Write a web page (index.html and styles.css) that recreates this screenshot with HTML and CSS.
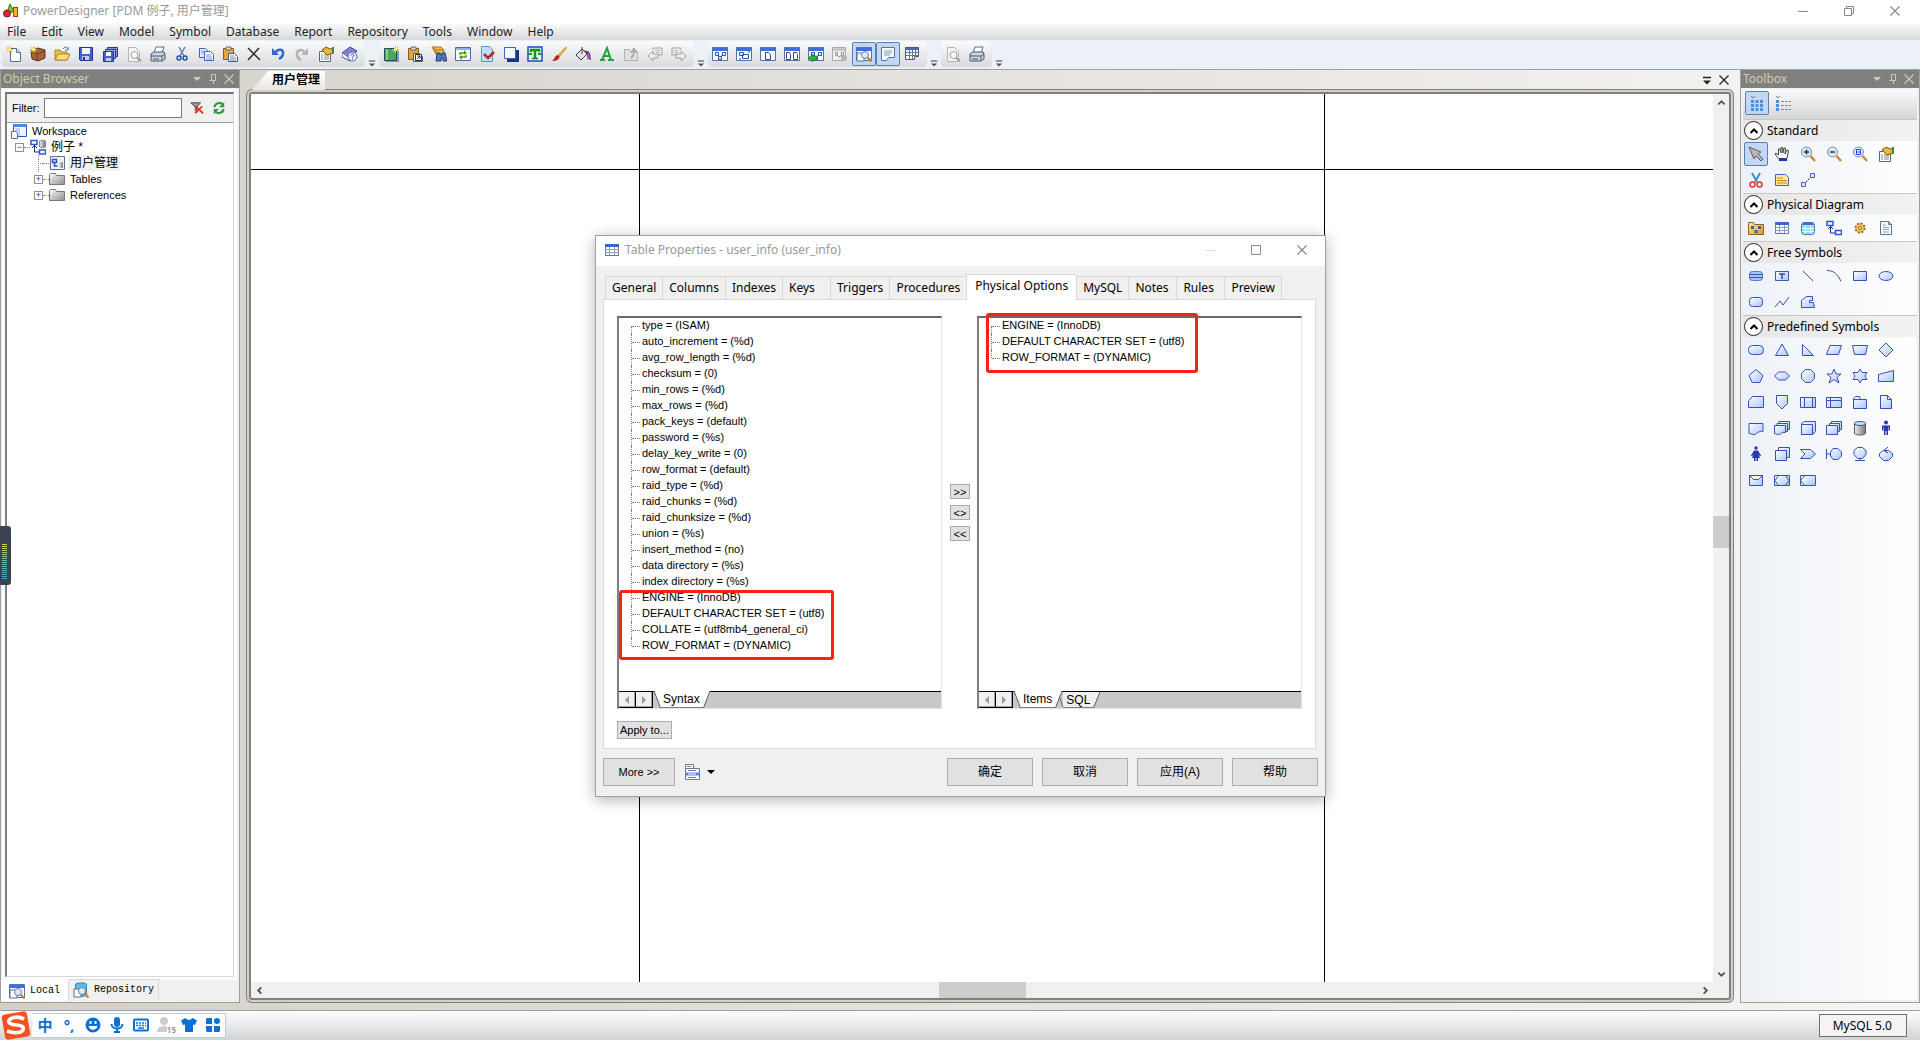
FILE: index.html
```html
<!DOCTYPE html>
<html lang="zh-CN">

	<head>
		<meta charset="UTF-8">
		<title>PowerDesigner [PDM 例子, 用户管理]</title>
		<link rel="stylesheet" href="styles.css">
	</head>

	<body>
		<!--图标库-->
		<svg class="sprite" aria-hidden="true">
			<defs>
				<linearGradient id="gBlue" x1="0" y1="0" x2="1" y2="1"><stop offset="0" stop-color="#fff"/><stop offset="1" stop-color="#a9c6fb"/></linearGradient>
				<linearGradient id="gGray" x1="0" y1="0" x2="1" y2="1"><stop offset="0" stop-color="#fff"/><stop offset="1" stop-color="#8c8c8c"/></linearGradient>
				<linearGradient id="gGold" x1="0" y1="0" x2="1" y2="1"><stop offset="0" stop-color="#fff0a8"/><stop offset="1" stop-color="#d99a1c"/></linearGradient>
				<linearGradient id="gCyl" x1="0" y1="0" x2="1" y2="0"><stop offset="0" stop-color="#eee"/><stop offset="1" stop-color="#777"/></linearGradient>
			</defs>
			<symbol id="spark" viewBox="0 0 16 16"><path d="M3.500 0v7M0 3.500h7M1 1l5 5M6 1L1 6" stroke="#f0c020"/><circle cx="3.500" cy="3.500" r="1.500" fill="#fff7a0"/></symbol>
			<symbol id="logo" viewBox="0 0 16 16"><path d="M8 1l4 8H5z" fill="#7dc243" stroke="#2f7a1c"/><rect x="11.500" y="4.500" width="4" height="9" fill="#f7b51b" stroke="#a83c0c"/><circle cx="5" cy="10.500" r="3.500" fill="#e3232c" stroke="#8c0f14"/></symbol>
			<symbol id="new" viewBox="0 0 16 16"><path d="M4.500 2.500h6l4 4v9h-10z" fill="#fff" stroke="#55708f"/><path d="M10.500 2.500v4h4" fill="#cfe0f2" stroke="#55708f"/><use href="#spark"/></symbol>
			<symbol id="project" viewBox="0 0 16 16"><path d="M1 5l7-3 7 2v8l-7 3-6-2z" fill="#a5653a" stroke="#5c3014"/><path d="M1 6l6 2 8-3M7 8v7" stroke="#6d3c1a" fill="none"/><use href="#spark"/></symbol>
			<symbol id="open" viewBox="0 0 16 16"><path d="M1 14V4h5l1 2h6v8z" fill="#f0bf45" stroke="#b1832a"/><path d="M1 14l3-6h12l-3 6z" fill="#fbdc7c" stroke="#b1832a"/><path d="M9 3c2-3 4-2 5 0M14 1v3h-3" stroke="#4a7bc0" fill="none"/></symbol>
			<symbol id="save" viewBox="0 0 16 16"><path d="M1.500 1.500h13v13h-12l-1-1z" fill="#4a5fd0" stroke="#28338f"/><path d="M4 2h8v6H4z" fill="#f4f7ff"/><path d="M4 10h7v4H4z" fill="#c8cfe8"/><path d="M5 11h2v3H5z" fill="#28338f"/></symbol>
			<symbol id="saveall" viewBox="0 0 16 16"><path d="M5.500 1.500h10v9h-10z" fill="#8b93dc" stroke="#28338f"/><path d="M3.500 3.500h10v9h-10z" fill="#aab1ea" stroke="#28338f"/><path d="M1.500 5.500h10v10h-10z" fill="#4a5fd0" stroke="#28338f"/><path d="M4 6h5v4H4z" fill="#f4f7ff"/><path d="M4 12h5v3H4z" fill="#c8cfe8"/></symbol>
			<symbol id="preview" viewBox="0 0 16 16"><path d="M2.500 1.500h7l4 4v10h-11z" fill="#f3f3f3" stroke="#b4b4b4"/><circle cx="8.500" cy="9" r="3.500" fill="#fafafa" stroke="#9a9a9a"/><path d="M11 12l4 3" stroke="#9a9a9a" stroke-width="2"/></symbol>
			<symbol id="print" viewBox="0 0 16 16"><path d="M6 1h8l-2 6H4z" fill="#fff" stroke="#5f6e86"/><path d="M1 8l3-2h10l1 2v5l-3 2H1z" fill="#cfd6e0" stroke="#4a5770"/><path d="M1 10h11l3-2M12 10v5M3 13h6" stroke="#4a5770" fill="none"/></symbol>
			<symbol id="cut" viewBox="0 0 16 16"><path d="M5 1l5 9M11 1L6 10" stroke="#6c7fa5" stroke-width="1.500"/><circle cx="5" cy="12" r="2" fill="none" stroke="#2450b8" stroke-width="1.500"/><circle cx="11" cy="12" r="2" fill="none" stroke="#2450b8" stroke-width="1.500"/></symbol>
			<symbol id="copy" viewBox="0 0 16 16"><path d="M1.500 2.500h6l2 2v7h-8z" fill="#e6efff" stroke="#3e62b4"/><path d="M6.500 5.500h6l3 3v6h-9z" fill="#fff" stroke="#3e62b4"/><path d="M3 5h3M3 7h3M8 9h5M8 11h6M8 13h6" stroke="#6a95e0"/></symbol>
			<symbol id="paste" viewBox="0 0 16 16"><path d="M1.500 2.500h10v11h-10z" fill="#e3a73b" stroke="#8e5a10"/><path d="M4 1h5v3H4z" fill="#ddd" stroke="#6b6b6b"/><path d="M6.500 7.500h6l3 3v5h-9z" fill="#fff" stroke="#445a88"/><path d="M8 10h4M8 12h6M8 14h6" stroke="#6a83b8"/></symbol>
			<symbol id="del" viewBox="0 0 16 16"><path d="M2 2l12 12M13 2L2 14" stroke="#2b2b2b" stroke-width="1.500"/></symbol>
			<symbol id="undo" viewBox="0 0 16 16"><path d="M5 7c3-5 9-4 8 1-.5 3-2 4-4 5" fill="none" stroke="#3468d0" stroke-width="2.500"/><path d="M2 2v7h7z" fill="#3468d0"/></symbol>
			<symbol id="redo" viewBox="0 0 16 16"><path d="M11 7C8 2 2 4 3 9c.5 3 2 4 4 5" fill="none" stroke="#b5b5b5" stroke-width="2.500"/><path d="M14 2v7H7z" fill="#b5b5b5"/></symbol>
			<symbol id="props" viewBox="0 0 16 16"><path d="M1.500 5.500h11v10h-11z" fill="#fff" stroke="#5b6675"/><path d="M3 9h2M6 9h5M3 11h2M6 11h5M3 13h2M6 13h5" stroke="#7b8696"/><path d="M4 4l4-3 4 2 4-1v5l-4 1-3 1z" fill="#e8b93b" stroke="#7d5b12"/><path d="M14 1h2v6h-2z" fill="#3b8a46"/></symbol>
			<symbol id="book" viewBox="0 0 16 16"><path d="M0 7l8-6 7 4-7 8z" fill="#8d7fd0" stroke="#4b4390"/><path d="M0 7v4l8 4v-2" fill="#fff" stroke="#4b4390"/><circle cx="10.500" cy="10.500" r="4.500" fill="#e9f1ff" stroke="#4d6bb4"/><path d="M9 9.500c0-2 3-2 3 0 0 1-1.500 1-1.500 2M10.500 12.500v1" fill="none" stroke="#2848a8"/></symbol>
			<symbol id="newmodel" viewBox="0 0 16 16"><path d="M1.500 2.500h12v12h-12z" fill="#4aa65a" stroke="#1f4d57"/><path d="M4 3v11" stroke="#c8e8cc"/><path d="M13 4l2 1v11H3" stroke="#334c70" fill="none"/><path d="M12.500 0v7M9 3.500h7M10 1l5 5M15 1l-5 5" stroke="#f0c020"/><circle cx="12.500" cy="3.500" r="1.500" fill="#fff7a0"/></symbol>
			<symbol id="pastelink" viewBox="0 0 16 16"><use href="#paste"/><path d="M8.500 8.500h6v6h-6z" fill="#fff" stroke="#333"/><path d="M10 13l3-3M10.500 10H13v2.500" stroke="#112a90" fill="none"/></symbol>
			<symbol id="find" viewBox="0 0 16 16"><path d="M1 1h9l3 3v4H5z" fill="#f2b950" stroke="#b07714"/><path d="M1 1l4 3h8M5 4v4" fill="none" stroke="#b07714"/><path d="M6 7h3v2h2V7h3l2 8h-4v-3h-2v3H5z" fill="#5277bd" stroke="#243c75"/></symbol>
			<symbol id="refresh" viewBox="0 0 16 16"><path d="M.5 1.500h15v13H.5z" fill="#fff" stroke="#4b6ca8"/><path d="M1 2h14v2H1z" fill="#8eb2ee"/><path d="M5 9V7h5M11 9v2H6" stroke="#4f9a14" stroke-width="1.500" fill="none"/><path d="M9 4l3 3-3 2zM7 9l-3 2 3 3z" fill="#4f9a14"/></symbol>
			<symbol id="check" viewBox="0 0 16 16"><path d="M2.500.5h8l3 3v12h-11z" fill="#bfe0fb" stroke="#5b93cc"/><path d="M5 8l4 4 6-6" stroke="#c4202c" stroke-width="2.500" fill="none"/></symbol>
			<symbol id="shadow" viewBox="0 0 16 16"><path d="M4 4h12v12H4z" fill="#16348e"/><path d="M1.500 1.500h11v11h-11z" fill="#f3f7ff" stroke="#3c62c4"/></symbol>
			<symbol id="textfmt" viewBox="0 0 16 16"><path d="M1 1h14v14H1z" fill="#e7ffe7" stroke="#1e48c8" stroke-width="1.500"/><path d="M3 3h10v3h-1l-1-1H9v7h2v1H5v-1h2V5H5L4 6H3z" fill="#179a27" stroke="#0c6d18" stroke-width=".5"/><path d="M1 8h4M11 8h4" stroke="#179a27" stroke-width="2"/></symbol>
			<symbol id="brush" viewBox="0 0 16 16"><path d="M14.500 1L7 9l1.500 1.500L16 2z" fill="#f4b23a" stroke="#b57a10" stroke-width=".5"/><path d="M7 9c-3 0-3 4-6 6 4 0 7-1 7.500-4.500z" fill="#b3251f"/></symbol>
			<symbol id="fill" viewBox="0 0 16 16"><path d="M1 9l6-6 5 5-6 6z" fill="#dfe4ea" stroke="#3c4148"/><path d="M7 1v7" stroke="#3c4148"/><path d="M9 5c4 0 4 3 4 8" stroke="#d82222" stroke-width="1.500" fill="none"/><path d="M11 6c4-1 4 4 4 8" stroke="#2849d8" stroke-width="1.500" fill="none"/></symbol>
			<symbol id="font" viewBox="0 0 16 16"><path d="M1 14h5M9 14h6M3 14L8 2l4 12M5 10h6" stroke="#23a33c" stroke-width="2" fill="none"/></symbol>
			<symbol id="folderup" viewBox="0 0 16 16"><path d="M1.500 3.500h5l1 2h7v9h-13z" fill="#e2e2e2" stroke="#b2b2b2"/><path d="M7 12c3 0 4-2 4-6M8 6l3-4 3 4z" stroke="#9d9d9d" fill="#b5b5b5"/></symbol>
			<symbol id="back" viewBox="0 0 16 16"><path d="M1 10l5-5v3h5v4H6v3z" fill="#ececec" stroke="#a0a0a0"/><path d="M6 4V2h9v7h-4" fill="none" stroke="#a0a0a0"/><path d="M8 4.500h5M9 6.500h4" stroke="#bbb"/></symbol>
			<symbol id="forward" viewBox="0 0 16 16"><path d="M15 10l-5-5v3H5v4h5v3z" fill="#ececec" stroke="#a0a0a0"/><path d="M10 4V2H1v7h4" fill="none" stroke="#a0a0a0"/><path d="M3 4.500h5M3 6.500h4" stroke="#bbb"/></symbol>
			<symbol id="win" viewBox="0 0 16 16"><path d="M.5 1.500h15v13H.5z" fill="#f8fbff" stroke="#5673a8"/><path d="M1 2h14v3H1z" fill="#3d6fdc"/></symbol>
			<symbol id="win1" viewBox="0 0 16 16"><use href="#win"/><path d="M3.500 6.500h3v3h-3zM10.500 6.500h3v3h-3zM6.500 10.500h3v3h-3zM6 9l2 2 3-2" fill="none" stroke="#2a4fb8"/></symbol>
			<symbol id="win2" viewBox="0 0 16 16"><use href="#win"/><path d="M3.500 6.500h4v3h-4zM6.500 8.500h6v4h-6zM12 6h2M3 13h2" fill="none" stroke="#2a4fb8"/></symbol>
			<symbol id="win3" viewBox="0 0 16 16"><use href="#win"/><path d="M5.500 6.500h3l2 2v5h-5z" fill="#fff" stroke="#33477a"/></symbol>
			<symbol id="win4" viewBox="0 0 16 16"><use href="#win"/><path d="M2.500 6.500h3l1 2v5h-4zM9.500 6.500h3l1 2v5h-4z" fill="#fff" stroke="#33477a"/></symbol>
			<symbol id="win5" viewBox="0 0 16 16"><use href="#win1"/><path d="M0 12l5-4v2h4v4H5v2z" fill="#2eb335" stroke="#117018" stroke-width=".5"/></symbol>
			<symbol id="win6" viewBox="0 0 16 16"><path d="M.5 1.500h13v13H.5z" fill="#f0f0f0" stroke="#aaa"/><path d="M1 2h12v3H1z" fill="#c8c8c8"/><path d="M3.500 6.500h2v3h-2zM9.500 6.500h2v3h-2zM5 9l2 2 3-2" fill="none" stroke="#999"/><circle cx="12" cy="12" r="3" fill="#b5b5b5"/></symbol>
			<symbol id="browser" viewBox="0 0 16 16"><use href="#win"/><path d="M1 7h5l2 2v6H1z" fill="#fff" stroke="#54709c"/><circle cx="9" cy="9" r="3.500" fill="#d9ecff" stroke="#6b7f9b"/><path d="M11.500 11.500l4 4" stroke="#d07a1c" stroke-width="2"/></symbol>
			<symbol id="output" viewBox="0 0 16 16"><path d="M1.500 1.500h13v10h-6l-2 3h-5z" fill="#f7faff" stroke="#5c7198"/><path d="M4 5h8M4 7h8M4 9h6" stroke="#8798b5"/></symbol>
			<symbol id="grid" viewBox="0 0 16 16"><path d="M1.500 1.500h13v9h-4v3h-9z" fill="#f7faff" stroke="#4d5870"/><path d="M2 3h12" stroke="#4a6bbd" stroke-width="2"/><path d="M2 6.500h12M2 9.500h12M5.500 4v9M8.500 4v9M11.500 4v7" stroke="#687591"/></symbol>
			<!--工具箱图标-->
			<symbol id="t-grid" viewBox="0 0 16 16"><path d="M2 1l2 2 2-2" fill="none" stroke="#777"/><path d="M2 5h3v3H2zM6.500 5h3v3h-3zM11 5h3v3h-3zM2 9h3v3H2zM6.500 9h3v3h-3zM11 9h3v3h-3zM2 13h3v3H2zM6.500 13h3v3h-3zM11 13h3v3h-3z" fill="#4f8fd8"/></symbol>
			<symbol id="t-list" viewBox="0 0 16 16"><path d="M1 1l2 2 2-2" fill="none" stroke="#777"/><path d="M1 5h3v3H1zM1 9h3v3H1zM1 13h3v3H1z" fill="#4f8fd8"/><path d="M6 6.500h10M6 10.500h10M6 14.500h10" stroke="#8a8a8a" stroke-dasharray="3 1"/></symbol>
			<symbol id="pointer" viewBox="0 0 16 16"><path d="M1 1l12 5-3 2 5 5-2 2-5-5-2 3z" fill="#b6b6b6" stroke="#5d5d5d"/></symbol>
			<symbol id="hand" viewBox="0 0 16 16"><path d="M4.500 12.500L1 8l1-1 2.500 2V3h1.500L7 7V1.500h1.500L9 7l1-5h1.500l-.5 6 2-4 1.500.5-1.500 8z" fill="#fff" stroke="#444"/><path d="M5 12.500h8V15H5z" fill="#1237b8"/></symbol>
			<symbol id="lens" viewBox="0 0 16 16"><circle cx="6.500" cy="6" r="5" fill="#d7ebff" stroke="#7a8ba5"/><path d="M10.500 10l4.500 5" stroke="#c98b28" stroke-width="2.500"/></symbol>
			<symbol id="zoomin" viewBox="0 0 16 16"><use href="#lens"/><path d="M4 6h5M6.500 3.500v5" stroke="#333" stroke-width="1.500"/></symbol>
			<symbol id="zoomout" viewBox="0 0 16 16"><use href="#lens"/><path d="M4 6h5" stroke="#333" stroke-width="1.500"/></symbol>
			<symbol id="zoompage" viewBox="0 0 16 16"><use href="#lens"/><path d="M4.500 3.500h4v5h-4zM4 6h5" stroke="#2448d8" fill="#fff"/></symbol>
			<symbol id="scissors" viewBox="0 0 16 16"><path d="M4 1l5 9M12 1L7 10" stroke="#3d8fd0" stroke-width="2"/><ellipse cx="4.500" cy="12.500" rx="2.500" ry="2.500" fill="none" stroke="#df3b22" stroke-width="1.500"/><ellipse cx="11.500" cy="12.500" rx="2.500" ry="2.500" fill="none" stroke="#df3b22" stroke-width="1.500"/></symbol>
			<symbol id="note" viewBox="0 0 16 16"><path d="M1.500 2.500h10l3 3v8h-13z" fill="#ffe9a0" stroke="#4a62b0"/><path d="M3 6h6M3 8.500h10M3 11h10" stroke="#c9860c"/></symbol>
			<symbol id="link" viewBox="0 0 16 16"><path d="M1.500 10.500h4v4h-4zM10.500 1.500h4v4h-4z" fill="#e4ecff" stroke="#4a5ec0"/><path d="M6 10l4-4" stroke="#222" stroke-dasharray="2 1"/></symbol>
			<symbol id="package" viewBox="0 0 16 16"><path d="M.5 14.500v-12h5l1 2h9v10z" fill="url(#gGold)" stroke="#8c6110"/><path d="M3 6h3v3H3zM10 6h3v3h-3zM6.500 10h3v3h-3z" fill="#3658b0"/><path d="M7 11h2v1H7zM4 7h1v1H4z" fill="#e33"/></symbol>
			<symbol id="table" viewBox="0 0 16 16"><path d="M1.500 2.500h13v11h-13z" fill="#fff" stroke="#6077a5"/><path d="M1 2h14v3H1z" fill="#3b66cf"/><path d="M1 7.500h14M1 10.500h14M5.500 5v8M10.500 5v8" stroke="#8c9dbd"/></symbol>
			<symbol id="view" viewBox="0 0 16 16"><rect x="1.500" y="2.500" width="13" height="12" rx="3" fill="#7fe8ea" stroke="#4d71ab"/><path d="M2 5V4l2-2h8l2 2v1z" fill="#3b72d8"/><path d="M2 8.500h12M2 11.500h12M5.500 5v9M10.500 5v9" stroke="#fff"/></symbol>
			<symbol id="ref" viewBox="0 0 16 16"><path d="M1 1.500h6v4H1zM9.500 10.500h6v4h-6z" fill="#fff" stroke="#2b56d8" stroke-width="1.500"/><path d="M4.500 6v7H9M2 9l2.500-2.500L7 9" stroke="#1a2c90" fill="none"/></symbol>
			<symbol id="gear" viewBox="0 0 16 16"><circle cx="8" cy="8" r="4.500" fill="#f0b645" stroke="#9a6414" stroke-width="2" stroke-dasharray="2 1.500"/><circle cx="8" cy="8" r="3.500" fill="#f6c860"/><circle cx="8" cy="8" r="1.500" fill="#fff" stroke="#9a6414"/></symbol>
			<symbol id="file" viewBox="0 0 16 16"><path d="M2.500 1.500h8l3 3v10h-11z" fill="#f4f8ff" stroke="#5c7396"/><path d="M5 5h3M5 7.500h6M5 9.500h6M5 12h6" stroke="#8fa3be"/><path d="M10.500 1.500v3h3" fill="none" stroke="#5c7396"/></symbol>
			<symbol id="title" viewBox="0 0 16 16"><rect x="1.500" y="3.500" width="13" height="9" rx="3" fill="#a8c4f5" stroke="#5a79c4"/><path d="M1 6.500h14M1 9.500h14" stroke="#3b57b0"/></symbol>
			<symbol id="tbox" viewBox="0 0 16 16"><path d="M1.500 3.500h13v9h-13z" fill="url(#gBlue)" stroke="#3b5bb4"/><path d="M5 6h6M8 6v5" stroke="#2c47a0" stroke-width="1.500"/></symbol>
			<symbol id="line" viewBox="0 0 16 16"><path d="M3 3l10 10" stroke="#3c50a8"/></symbol>
			<symbol id="arc" viewBox="0 0 16 16"><path d="M1 2.500c7 0 11 4 14 11" fill="none" stroke="#3c50a8"/></symbol>
			<symbol id="rect" viewBox="0 0 16 16"><path class="s" d="M1.500 3.500h13v9h-13z"/></symbol>
			<symbol id="ellipse" viewBox="0 0 16 16"><ellipse class="s" cx="8" cy="8" rx="7" ry="4.500"/></symbol>
			<symbol id="round" viewBox="0 0 16 16"><rect class="s" x="1.500" y="3.500" width="13" height="9" rx="3"/></symbol>
			<symbol id="poly" viewBox="0 0 16 16"><path d="M1 13l5-6 3 4 6-8" fill="none" stroke="#3c50a8"/></symbol>
			<symbol id="polygon" viewBox="0 0 16 16"><path class="s" d="M1.500 13.500v-7l5-4h6v4h-3v2h4l1 5z"/></symbol>
			<symbol id="p1" viewBox="0 0 16 16"><rect class="s" x=".5" y="3.500" width="15" height="9" rx="4"/></symbol>
			<symbol id="p2" viewBox="0 0 16 16"><path class="s" d="M8 2l6.500 11.500h-13z"/></symbol>
			<symbol id="p3" viewBox="0 0 16 16"><path class="s" d="M2.500 2.500l11 11h-11z"/></symbol>
			<symbol id="p4" viewBox="0 0 16 16"><path class="s" d="M4 3.500h11.500l-3 9H.5z"/></symbol>
			<symbol id="p5" viewBox="0 0 16 16"><path class="s" d="M.5 3.500h15l-2 9h-11z"/></symbol>
			<symbol id="p6" viewBox="0 0 16 16"><path class="s" d="M8 1l7 7-7 7-7-7z"/></symbol>
			<symbol id="p7" viewBox="0 0 16 16"><path class="s" d="M8 1.500l7 6-3 7H4l-3-7z"/></symbol>
			<symbol id="p8" viewBox="0 0 16 16"><path class="s" d="M.5 8l4-4h7l4 4-4 4h-7z"/></symbol>
			<symbol id="p9" viewBox="0 0 16 16"><path class="s" d="M5.500 1.500h5l4 4v5l-4 4h-5l-4-4v-5z"/></symbol>
			<symbol id="p10" viewBox="0 0 16 16"><path class="s" d="M8 1l2 5h5l-4 3.500 2 5.500-5-3.500L3 15l2-5.500L1 6h5z"/></symbol>
			<symbol id="p11" viewBox="0 0 16 16"><path class="s" d="M8 1l2 3.500h5L13 8l2 3.500h-5L8 15l-2-3.500H1L3 8 1 4.500h5z"/></symbol>
			<symbol id="p12" viewBox="0 0 16 16"><path class="s" d="M.5 13.500v-7l15-4v11z"/></symbol>
			<symbol id="p13" viewBox="0 0 16 16"><path class="s" d="M.5 13.500V7l4-4.500h11v11z"/></symbol>
			<symbol id="p14" viewBox="0 0 16 16"><path class="s" d="M2.500 1.500h11v8L8 15l-5.500-5.500z"/></symbol>
			<symbol id="p15" viewBox="0 0 16 16"><path class="s" d="M.5 3.500h15v10H.5zM4.500 3.500v10M12.500 3.500v10"/></symbol>
			<symbol id="p16" viewBox="0 0 16 16"><path class="s" d="M.5 3.500h15v10H.5zM.5 6.500h15M4.500 3.500v10"/></symbol>
			<symbol id="p17" viewBox="0 0 16 16"><path class="s" d="M1.500 14.500v-10l2-2h4l1 3h6v9zM1.500 5.500h7"/></symbol>
			<symbol id="p18" viewBox="0 0 16 16"><path class="s" d="M2.500 1.500h7l4 4v9h-11zM9.500 1.500v4h4"/></symbol>
			<symbol id="p19" viewBox="0 0 16 16"><path class="s" d="M1 3.500h14v8c-5-1-6 3-9 3-2 0-4-1-5-1z"/></symbol>
			<symbol id="p20" viewBox="0 0 16 16"><path class="s" d="M5 1.500h10.500v8H5z"/><path class="s" d="M3 3.500h10.500v8H3z"/><path class="s" d="M.5 5.500h11v7c-4-1-4 2-7 2-2 0-3-1-4-1z"/></symbol>
			<symbol id="p21" viewBox="0 0 16 16"><path class="s" d="M4.500 1.500h11v10l-3 3h-11v-11z"/><path class="s" d="M1.500 4.500h11v10h-11z"/></symbol>
			<symbol id="p22" viewBox="0 0 16 16"><path class="s" d="M5.500 1.500h10v8h-10z"/><path class="s" d="M3.500 3.500h10v8h-10z"/><path class="s" d="M.5 5.500h11v9H.5z"/></symbol>
			<symbol id="p23" viewBox="0 0 16 16"><path d="M2.500 3.500v10c2 2 9 2 11 0v-10z" fill="url(#gCyl)" stroke="#555a70"/><ellipse cx="8" cy="3.500" rx="5.500" ry="2" fill="#cfdcff" stroke="#3c50a8"/></symbol>
			<symbol id="p24" viewBox="0 0 16 16"><circle cx="8" cy="2.500" r="2" fill="#2a36b0"/><path d="M4 5.500h8v5h-1.500V7H10v8H8.500v-4h-1v4H6V7h-.5v3.500H4z" fill="#2a36b0"/></symbol>
			<symbol id="p25" viewBox="0 0 16 16"><circle cx="8" cy="2" r="1.700" fill="#2a36b0"/><path d="M6 4.500h4l3 5-1 1-2-3 2 4.500h-2V15H8.500v-3h-1v3H6v-3H4l2-4.500-2 3-1-1z" fill="#2a36b0"/></symbol>
			<symbol id="p26" viewBox="0 0 16 16"><path class="s" d="M4.500 1.500h11v10h-11z"/><path class="s" d="M1.500 4.500h11v10h-11z"/></symbol>
			<symbol id="p27" viewBox="0 0 16 16"><path class="s" d="M.5 3.500h10l5 4.500-5 4.500H.5L5 8z"/></symbol>
			<symbol id="p28" viewBox="0 0 16 16"><path class="s" d="M.5 3v10M.5 8h4M7 2.500h5L15.500 6v4L12 13.500H7L4.500 10V6z"/></symbol>
			<symbol id="p29" viewBox="0 0 16 16"><path class="s" d="M5.500 1.500h5l3.500 3v4l-3.500 4h-5l-3.500-4v-4zM8 12.500v2M3 14.500h10"/></symbol>
			<symbol id="p30" viewBox="0 0 16 16"><path class="s" d="M5.500 4.500h5l4 3v3l-4 4h-5l-4-4v-3z"/><path d="M10 1L6 4.500 10 7" fill="none" stroke="#2a3db5"/></symbol>
			<symbol id="p31" viewBox="0 0 16 16"><path class="s" d="M1.500 3.500h13v10h-13zM1.500 3.500l4 4h5l4-4"/></symbol>
			<symbol id="p32" viewBox="0 0 16 16"><path class="s" d="M.5 3.500h15v10H.5zM4.500 3.500L1 8.500l3.500 5M11.500 3.500l3.500 5-3.500 5"/></symbol>
			<symbol id="p33" viewBox="0 0 16 16"><path class="s" d="M.5 3.500h15v10H.5zM5 3.500l-4.500 5 4.500 5"/></symbol>
			<!--窗口与树图标-->
			<symbol id="down" viewBox="0 0 10 10"><path d="M1 3h8L5 7z" fill="currentColor"/></symbol>
			<symbol id="pin" viewBox="0 0 10 10"><path d="M3.500 6V.5h4V6M1.500 6.500h7M5.500 7v3" fill="none" stroke="currentColor"/></symbol>
			<symbol id="x" viewBox="0 0 10 10"><path d="M.5.5l9 9M9.500.5l-9 9" stroke="currentColor" stroke-width="1.200"/></symbol>
			<symbol id="min" viewBox="0 0 10 10"><path d="M0 5.500h10" stroke="currentColor"/></symbol>
			<symbol id="max" viewBox="0 0 10 10"><path d="M.5.5h9v9h-9z" fill="none" stroke="currentColor"/></symbol>
			<symbol id="restore" viewBox="0 0 10 10"><path d="M.5 2.500h7v7h-7zM2.500 2.500v-2h7v7h-2" fill="none" stroke="currentColor"/></symbol>
			<symbol id="more" viewBox="0 0 10 10"><path d="M1 2.500h8" stroke="currentColor" stroke-width="1.500"/><path d="M1 5.500h8L5 9.500z" fill="currentColor"/></symbol>
			<symbol id="chev" viewBox="0 0 10 10"><path d="M1.500 7L5 3.500 8.500 7" fill="none" stroke="currentColor" stroke-width="2"/></symbol>
			<symbol id="tri" viewBox="0 0 10 10"><path d="M7 1v8L3 5z" fill="currentColor"/></symbol>
			<symbol id="workspace" viewBox="0 0 16 16"><path d="M2.500 1.500h13v12h-13z" fill="#eef4ff" stroke="#2a57c8"/><path d="M2 1h14v3H2z" fill="#4f86ec"/><path d="M4 5h5v8H4z" fill="#c0d3f4"/><path d="M.5 8.500h4l2 2v5h-6z" fill="#fff" stroke="#54709c"/></symbol>
			<symbol id="pdm" viewBox="0 0 16 16"><path d="M9.500 2v6c1 1 5 1 6 0V2c-1-1-5-1-6 0z" fill="url(#gCyl)" stroke="#888"/><path d="M1 1.500h6v4H1zM9.500 11h6v4h-6z" fill="#fff" stroke="#2b56d8" stroke-width="1.500"/><path d="M4.500 6v7H9M2 9l2.500-2.500L7 9" stroke="#1a2c90" fill="none"/></symbol>
			<symbol id="diagram" viewBox="0 0 16 16"><path d="M1.500 1.500h14v13h-14z" fill="#eef1f6" stroke="#5f718f"/><path d="M3.500 4.500h4v3h-4zM5.500 8v3h3" fill="none" stroke="#2450c8" stroke-width="1.500"/><path d="M10 7h4v6h-4z" fill="url(#gCyl)"/></symbol>
			<symbol id="folder" viewBox="0 0 16 16"><path d="M.5 13.500v-10l1-1h5l1 2h8v9z" fill="url(#gGray)" stroke="#777"/></symbol>
			<symbol id="nofilter" viewBox="0 0 16 16"><path d="M1 2h11L8 7v6l-2-2V7z" fill="#9a9a9a" stroke="#444"/><path d="M6 6l9 8M14 6l-8 8" stroke="#e8321c" stroke-width="2"/></symbol>
			<symbol id="sync" viewBox="0 0 16 16"><path d="M3 7c0-5 7-6 9-3M13 9c0 5-7 6-9 3" fill="none" stroke="#2d9a46" stroke-width="2.500"/><path d="M14 1v6H8zM2 15V9h6z" fill="#2d9a46"/></symbol>
			<symbol id="report" viewBox="0 0 16 16"><path d="M1.500 15.500V.5h8v4h6v11z" fill="#fff" stroke="#6c7a90"/><path d="M1 4.500h9M3 2.500h4M4 6.500h8M4 13.500h8" stroke="#6c7a90"/><path d="M2 8.500h13v3H2z" fill="#5a7cf0"/><path d="M4 10h8" stroke="#fff"/></symbol>
			<symbol id="repo" viewBox="0 0 16 16"><path d="M2.500 2v11c2 2 9 2 11 0V2c-3-1.500-8-1.500-11 0z" fill="#62b8e8" stroke="#3684b8"/><path d="M1 7h5l2 2v6H1z" fill="#fff" stroke="#54709c"/><circle cx="9" cy="9" r="3.500" fill="#d9ecff" stroke="#6b7f9b"/><path d="M11.500 11.500l4 4" stroke="#d07a1c" stroke-width="2"/></symbol>
			<!--输入法图标-->
			<symbol id="sogou" viewBox="0 0 32 32"><rect x="2" y="2" width="28" height="28" rx="4" fill="#f4511e" transform="rotate(-10 16 16)"/><path d="M25 9C18 5 8 7 8 12c1 5 16 2 16 7 0 6-11 6-18 3" fill="none" stroke="#fff" stroke-width="4"/></symbol>
			<symbol id="smile" viewBox="0 0 16 16"><circle cx="8" cy="8" r="7.500" fill="#0b6fd8"/><path d="M5.500 4v3M10.500 4v3" stroke="#fff" stroke-width="2"/><path d="M3.500 9h9c-1 5-8 5-9 0z" fill="#fff"/></symbol>
			<symbol id="mic" viewBox="0 0 16 16"><rect x="5" y="0" width="6" height="10" rx="3" fill="#0b6fd8"/><path d="M2.500 7c0 6 11 6 11 0M8 11v4M5 15h6" fill="none" stroke="#0b6fd8" stroke-width="2"/></symbol>
			<symbol id="keyb" viewBox="0 0 16 16"><rect x="1" y="2.500" width="14" height="11" rx="1" fill="none" stroke="#0b6fd8" stroke-width="2"/><path d="M3 6h10M3 8.500h10" stroke="#0b6fd8" stroke-width="1.500" stroke-dasharray="2 1"/><path d="M5 11h6" stroke="#0b6fd8" stroke-width="1.500"/></symbol>
			<symbol id="user" viewBox="0 0 16 16"><circle cx="7" cy="4" r="4" fill="#ccc"/><path d="M0 15c0-8 14-8 14 0z" fill="#ccc"/></symbol>
			<symbol id="shirt" viewBox="0 0 16 16"><path d="M4.500 1c2 2.500 5 2.500 7 0L16 3.500 14 8l-2-.5V15H4V7.500L2 8 0 3.500z" fill="#0b6fd8"/></symbol>
			<symbol id="apps" viewBox="0 0 16 16"><path d="M2 1h5v6H1V2zM9 4a3 3 0 1 1 6 0 3 3 0 1 1-6 0zM1 9h6v6H2l-1-1zM9 9h6v5l-1 1H9z" fill="#0b6fd8"/></symbol>
		</svg>

		<div class="app">
			<header class="titlebar">
				<svg class="ico"><use href="#logo"/></svg>
				<h1 class="title">PowerDesigner [PDM 例子, 用户管理]</h1>
				<div class="win_btns">
					<button aria-label="Minimize"><svg><use href="#min"/></svg></button>
					<button aria-label="Restore"><svg><use href="#restore"/></svg></button>
					<button aria-label="Close"><svg><use href="#x"/></svg></button>
				</div>
			</header>

			<nav class="menubar">
				<button>File</button><button>Edit</button><button>View</button><button>Model</button><button>Symbol</button><button>Database</button><button>Report</button><button>Repository</button><button>Tools</button><button>Window</button><button>Help</button>
			</nav>

			<div class="toolbar">
				<div class="group">
					<button aria-label="New"><svg class="ico"><use href="#new"/></svg></button>
					<button aria-label="New Project"><svg class="ico"><use href="#project"/></svg></button>
					<button aria-label="Open"><svg class="ico"><use href="#open"/></svg></button>
					<button aria-label="Save"><svg class="ico"><use href="#save"/></svg></button>
					<button aria-label="Save All"><svg class="ico"><use href="#saveall"/></svg></button>
					<button aria-label="Print Preview"><svg class="ico"><use href="#preview"/></svg></button>
					<button aria-label="Print"><svg class="ico"><use href="#print"/></svg></button>
					<button aria-label="Cut"><svg class="ico"><use href="#cut"/></svg></button>
					<button aria-label="Copy"><svg class="ico"><use href="#copy"/></svg></button>
					<button aria-label="Paste"><svg class="ico"><use href="#paste"/></svg></button>
					<button aria-label="Delete"><svg class="ico"><use href="#del"/></svg></button>
					<button aria-label="Undo"><svg class="ico"><use href="#undo"/></svg></button>
					<button aria-label="Redo"><svg class="ico"><use href="#redo"/></svg></button>
					<button aria-label="Properties"><svg class="ico"><use href="#props"/></svg></button>
					<button aria-label="Help"><svg class="ico"><use href="#book"/></svg></button>
				</div>
				<button class="overflow" aria-label="Toolbar Options"><svg><use href="#more"/></svg></button>
				<div class="group">
					<button aria-label="New Model"><svg class="ico"><use href="#newmodel"/></svg></button>
					<button aria-label="Paste Shortcut"><svg class="ico"><use href="#pastelink"/></svg></button>
					<button aria-label="Find"><svg class="ico"><use href="#find"/></svg></button>
					<button aria-label="Refresh"><svg class="ico"><use href="#refresh"/></svg></button>
					<button aria-label="Check Model"><svg class="ico"><use href="#check"/></svg></button>
					<button aria-label="Shadow"><svg class="ico"><use href="#shadow"/></svg></button>
					<button aria-label="Text Format"><svg class="ico"><use href="#textfmt"/></svg></button>
					<button aria-label="Line Style"><svg class="ico"><use href="#brush"/></svg></button>
					<button aria-label="Fill"><svg class="ico"><use href="#fill"/></svg></button>
					<button aria-label="Font"><svg class="ico"><use href="#font"/></svg></button>
					<button aria-label="Parent Diagram"><svg class="ico"><use href="#folderup"/></svg></button>
					<button aria-label="Previous"><svg class="ico"><use href="#back"/></svg></button>
					<button aria-label="Next"><svg class="ico"><use href="#forward"/></svg></button>
				</div>
				<button class="overflow" aria-label="Toolbar Options"><svg><use href="#more"/></svg></button>
				<div class="group">
					<button aria-label="Diagram"><svg class="ico"><use href="#win1"/></svg></button>
					<button aria-label="Selection"><svg class="ico"><use href="#win2"/></svg></button>
					<button aria-label="Page"><svg class="ico"><use href="#win3"/></svg></button>
					<button aria-label="Pages"><svg class="ico"><use href="#win4"/></svg></button>
					<button aria-label="Previous View"><svg class="ico"><use href="#win5"/></svg></button>
					<button aria-label="Next View"><svg class="ico"><use href="#win6"/></svg></button>
					<button class="on" aria-label="Browser"><svg class="ico"><use href="#browser"/></svg></button>
					<button class="on" aria-label="Output"><svg class="ico"><use href="#output"/></svg></button>
					<button aria-label="Result List"><svg class="ico"><use href="#grid"/></svg></button>
				</div>
				<button class="overflow" aria-label="Toolbar Options"><svg><use href="#more"/></svg></button>
				<div class="group">
					<button aria-label="Print Preview"><svg class="ico"><use href="#preview"/></svg></button>
					<button aria-label="Print"><svg class="ico"><use href="#print"/></svg></button>
				</div>
				<button class="overflow" aria-label="Toolbar Options"><svg><use href="#more"/></svg></button>
			</div>

			<main class="main">
				<!--左侧对象浏览器-->
				<aside class="panel browser">
					<div class="panel_head">
						<h2>Object Browser</h2>
						<button aria-label="Menu"><svg><use href="#down"/></svg></button>
						<button aria-label="Pin"><svg><use href="#pin"/></svg></button>
						<button aria-label="Close"><svg><use href="#x"/></svg></button>
					</div>
					<div class="browser_box">
						<div class="filter">
							<label for="filter">Filter:</label>
							<input id="filter" type="text">
							<button aria-label="Clear filter"><svg class="ico"><use href="#nofilter"/></svg></button>
							<button aria-label="Refresh"><svg class="ico"><use href="#sync"/></svg></button>
						</div>
						<ul class="tree">
							<li class="lv0"><svg class="ico"><use href="#workspace"/></svg><span>Workspace</span></li>
							<li class="lv1"><i class="box">−</i><i class="dash"></i><svg class="ico"><use href="#pdm"/></svg><span class="cjk">例子 *</span></li>
							<li class="lv2"><i class="box none"></i><i class="dash"></i><svg class="ico"><use href="#diagram"/></svg><span class="cjk cur">用户管理</span></li>
							<li class="lv2"><i class="box">+</i><i class="dash"></i><svg class="ico"><use href="#folder"/></svg><span>Tables</span></li>
							<li class="lv2"><i class="box">+</i><i class="dash"></i><svg class="ico"><use href="#folder"/></svg><span>References</span></li>
						</ul>
					</div>
					<div class="browser_tabs">
						<button class="active"><svg class="ico"><use href="#browser"/></svg>Local</button>
						<button><svg class="ico"><use href="#repo"/></svg>Repository</button>
					</div>
				</aside>

				<!--中间画布-->
				<section class="work">
					<div class="doc_tabs">
						<button class="doc_tab">用户管理</button>
						<span class="rule"></span>
						<button class="doc_btn" aria-label="Window list"><svg><use href="#more"/></svg></button>
						<button class="doc_btn" aria-label="Close"><svg><use href="#x"/></svg></button>
					</div>
					<div class="frame">
						<div class="canvas">
							<div class="page_line h"></div>
							<div class="page_line v v1"></div>
							<div class="page_line v v2"></div>
						</div>
						<div class="scroll vert">
							<button aria-label="Up"><svg><use href="#chev"/></svg></button>
							<span class="thumb"></span>
							<button aria-label="Down"><svg class="r180"><use href="#chev"/></svg></button>
						</div>
						<div class="scroll horz">
							<button aria-label="Left"><svg class="r270"><use href="#chev"/></svg></button>
							<span class="thumb"></span>
							<button aria-label="Right"><svg class="r90"><use href="#chev"/></svg></button>
						</div>
					</div>
				</section>

				<!--右侧工具箱-->
				<aside class="panel toolbox">
					<div class="panel_head">
						<h2>Toolbox</h2>
						<button aria-label="Menu"><svg><use href="#down"/></svg></button>
						<button aria-label="Pin"><svg><use href="#pin"/></svg></button>
						<button aria-label="Close"><svg><use href="#x"/></svg></button>
					</div>
					<div class="toolbox_body">
						<div class="tb_modes">
							<button class="on" aria-label="Icons"><svg class="ico"><use href="#t-grid"/></svg></button>
							<button aria-label="List"><svg class="ico"><use href="#t-list"/></svg></button>
						</div>
						<h3><button aria-label="Collapse"><svg><use href="#chev"/></svg></button>Standard</h3>
						<div class="tools">
							<button class="on" aria-label="Pointer"><svg class="ico"><use href="#pointer"/></svg></button>
							<button aria-label="Grabber"><svg class="ico"><use href="#hand"/></svg></button>
							<button aria-label="Zoom In"><svg class="ico"><use href="#zoomin"/></svg></button>
							<button aria-label="Zoom Out"><svg class="ico"><use href="#zoomout"/></svg></button>
							<button aria-label="Open Diagram"><svg class="ico"><use href="#zoompage"/></svg></button>
							<button aria-label="Properties"><svg class="ico"><use href="#props"/></svg></button>
							<button aria-label="Delete"><svg class="ico"><use href="#scissors"/></svg></button>
							<button aria-label="Note"><svg class="ico"><use href="#note"/></svg></button>
							<button aria-label="Link"><svg class="ico"><use href="#link"/></svg></button>
						</div>
						<h3><button aria-label="Collapse"><svg><use href="#chev"/></svg></button>Physical Diagram</h3>
						<div class="tools">
							<button aria-label="Package"><svg class="ico"><use href="#package"/></svg></button>
							<button aria-label="Table"><svg class="ico"><use href="#table"/></svg></button>
							<button aria-label="View"><svg class="ico"><use href="#view"/></svg></button>
							<button aria-label="Reference"><svg class="ico"><use href="#ref"/></svg></button>
							<button aria-label="Procedure"><svg class="ico"><use href="#gear"/></svg></button>
							<button aria-label="File"><svg class="ico"><use href="#file"/></svg></button>
						</div>
						<h3><button aria-label="Collapse"><svg><use href="#chev"/></svg></button>Free Symbols</h3>
						<div class="tools">
							<button aria-label="Title"><svg class="ico"><use href="#title"/></svg></button>
							<button aria-label="Text"><svg class="ico"><use href="#tbox"/></svg></button>
							<button aria-label="Line"><svg class="ico"><use href="#line"/></svg></button>
							<button aria-label="Arc"><svg class="ico"><use href="#arc"/></svg></button>
							<button aria-label="Rectangle"><svg class="ico"><use href="#rect"/></svg></button>
							<button aria-label="Ellipse"><svg class="ico"><use href="#ellipse"/></svg></button>
							<button aria-label="Rounded Rectangle"><svg class="ico"><use href="#round"/></svg></button>
							<button aria-label="Polyline"><svg class="ico"><use href="#poly"/></svg></button>
							<button aria-label="Polygon"><svg class="ico"><use href="#polygon"/></svg></button>
						</div>
						<h3><button aria-label="Collapse"><svg><use href="#chev"/></svg></button>Predefined Symbols</h3>
						<div class="tools" id="predefined"></div>
					</div>
				</aside>
			</main>

			<footer class="statusbar">
				<div class="ime">
					<svg class="ime_logo"><use href="#sogou"/></svg>
					<div class="ime_bar">
						<button class="ime_txt">中</button>
						<button class="ime_txt">°,</button>
						<button aria-label="Emoji"><svg class="ico"><use href="#smile"/></svg></button>
						<button aria-label="Voice"><svg class="ico"><use href="#mic"/></svg></button>
						<button aria-label="Keyboard"><svg class="ico"><use href="#keyb"/></svg></button>
						<button aria-label="User" class="user"><svg class="ico"><use href="#user"/></svg><b>15</b></button>
						<button aria-label="Skin"><svg class="ico"><use href="#shirt"/></svg></button>
						<button aria-label="Tools"><svg class="ico"><use href="#apps"/></svg></button>
					</div>
				</div>
				<span class="dbms">MySQL 5.0</span>
			</footer>
		</div>

		<div class="side_meter"><span></span></div>

		<!--表属性窗口-->
		<div class="dialog" role="dialog" aria-labelledby="dlgTitle">
			<div class="dlg_title">
				<svg class="ico"><use href="#table"/></svg>
				<h2 id="dlgTitle">Table Properties - user_info (user_info)</h2>
				<div class="win_btns">
					<button aria-label="Minimize" disabled><svg><use href="#min"/></svg></button>
					<button aria-label="Maximize"><svg><use href="#max"/></svg></button>
					<button aria-label="Close"><svg><use href="#x"/></svg></button>
				</div>
			</div>
			<div class="dlg_body">
				<div class="tabs" role="tablist">
					<button role="tab">General</button><button role="tab">Columns</button><button role="tab">Indexes</button><button role="tab">Keys</button><button role="tab">Triggers</button><button role="tab">Procedures</button><button role="tab" class="active" aria-selected="true">Physical Options</button><button role="tab">MySQL</button><button role="tab">Notes</button><button role="tab">Rules</button><button role="tab">Preview</button>
				</div>
				<div class="tab_page">
					<div class="lists">
						<div class="listbox">
							<ul class="options">
								<li>type = (ISAM)</li>
								<li>auto_increment = (%d)</li>
								<li>avg_row_length = (%d)</li>
								<li>checksum = (0)</li>
								<li>min_rows = (%d)</li>
								<li>max_rows = (%d)</li>
								<li>pack_keys = (default)</li>
								<li>password = (%s)</li>
								<li>delay_key_write = (0)</li>
								<li>row_format = (default)</li>
								<li>raid_type = (%d)</li>
								<li>raid_chunks = (%d)</li>
								<li>raid_chunksize = (%d)</li>
								<li>union = (%s)</li>
								<li>insert_method = (no)</li>
								<li>data directory = (%s)</li>
								<li>index directory = (%s)</li>
								<li>ENGINE = (InnoDB)</li>
								<li>DEFAULT CHARACTER SET = (utf8)</li>
								<li>COLLATE = (utf8mb4_general_ci)</li>
								<li>ROW_FORMAT = (DYNAMIC)</li>
							</ul>
							<div class="mark mark_left"></div>
							<div class="sheets">
								<button class="nav" aria-label="Previous"><svg><use href="#tri"/></svg></button>
								<button class="nav" aria-label="Next"><svg class="r180"><use href="#tri"/></svg></button>
								<svg class="slant on" viewBox="0 0 8 17"><path d="M1 0l7 17V0z"/><path class="ln" d="M1 0l6.500 17"/></svg>
								<button class="sheet on">Syntax</button>
								<svg class="slant on" viewBox="0 0 8 17"><path d="M7 0L0 17V0z"/><path class="ln" d="M7 0L.5 17"/></svg>
							</div>
						</div>
						<div class="movers">
							<button>&gt;&gt;</button>
							<button>&lt;&gt;</button>
							<button>&lt;&lt;</button>
						</div>
						<div class="listbox">
							<ul class="options">
								<li>ENGINE = (InnoDB)</li>
								<li>DEFAULT CHARACTER SET = (utf8)</li>
								<li>ROW_FORMAT = (DYNAMIC)</li>
							</ul>
							<div class="mark mark_right"></div>
							<div class="sheets">
								<button class="nav" aria-label="Previous"><svg><use href="#tri"/></svg></button>
								<button class="nav" aria-label="Next"><svg class="r180"><use href="#tri"/></svg></button>
								<svg class="slant on" viewBox="0 0 8 17"><path d="M1 0l7 17V0z"/><path class="ln" d="M1 0l6.500 17"/></svg>
								<button class="sheet on">Items</button>
								<svg class="slant on" viewBox="0 0 8 17"><path d="M7 0L0 17V0z"/><path class="ln" d="M7 0L.5 17M4.500 6L8 16"/></svg>
								<button class="sheet">SQL</button>
								<svg class="slant" viewBox="0 0 8 17"><path d="M7 1L0 17V1z"/><path class="ln" d="M7 1L.5 17"/></svg>
							</div>
						</div>
					</div>
					<button class="btn small">Apply to...</button>
				</div>
				<div class="dlg_foot">
					<button class="btn more">More &gt;&gt;</button>
					<button class="report" aria-label="Report"><svg class="ico"><use href="#report"/></svg><svg><use href="#down"/></svg></button>
					<span class="fill"></span>
					<button class="btn">确定</button>
					<button class="btn">取消</button>
					<button class="btn">应用(A)</button>
					<button class="btn">帮助</button>
				</div>
			</div>
		</div>

		<script type="text/javascript">
			//预定义符号一共33个，循环生成按钮
			var box = document.getElementById("predefined");
			var html = "";
			for(var i = 1; i <= 33; i++) {
				html += '<button aria-label="Symbol ' + i + '"><svg class="ico"><use href="#p' + i + '"/></svg></button>';
			}
			box.innerHTML = html;
		</script>
	</body>

</html>
```
FILE: styles.css
```css
* {
	box-sizing: border-box;
}

body {
	margin: 0;
	font-family: "Noto Sans", "Noto Sans CJK SC", sans-serif;
	font-size: 12px;
	line-height: 16px;
	color: #000;
	overflow: hidden;
}

button {
	margin: 0;
	padding: 0;
	border: 0;
	background: none;
	font: inherit;
	color: inherit;
	display: flex;
	align-items: center;
	justify-content: center;
}

h1, h2, h3 {
	margin: 0;
	font-size: 12px;
	font-weight: normal;
}

ul {
	list-style-type: none;
	margin: 0;
	padding: 0;
}

svg {
	display: block;
	width: 10px;
	height: 10px;
	flex: none;
}

.sprite {
	position: absolute;
	width: 0;
	height: 0;
}

.ico {
	width: 16px;
	height: 16px;
}

/*工具箱图形统一描边*/
.s {
	fill: url(#gBlue);
	stroke: #3a4fbe;
}

.r90 { transform: rotate(90deg); }
.r180 { transform: rotate(180deg); }
.r270 { transform: rotate(270deg); }

.app {
	display: flex;
	flex-direction: column;
	height: 100vh;
}

/*标题栏和菜单*/
.titlebar {
	display: flex;
	align-items: center;
	height: 23px;
	padding: 0 2px 2px;
	background: #fff;
}

.title {
	flex: 1;
	margin-left: 5px;
	color: #999;
}

.win_btns {
	display: flex;
	color: #888;
}

.win_btns button {
	width: 46px;
	height: 20px;
}

.win_btns button:disabled {
	color: #ddd;
}

.menubar {
	display: flex;
	height: 17px;
	background: linear-gradient(#fbfcfe, #d6d8da);
	color: #222;
}

.menubar button {
	padding: 0 8px 0 7px;
}

/*工具条*/
.toolbar {
	display: flex;
	height: 30px;
	padding: 1px 0 2px 2px;
	background: #ecf0f7;
	border-bottom: 1px solid #a0a0a0;
}

.group {
	display: flex;
	align-items: center;
	padding-right: 3px;
	border-radius: 4px;
	background: linear-gradient(#fafbfc, #d8dadd);
}

.group button {
	width: 24px;
	height: 24px;
}

.group .on, .tb_modes .on, .tools .on {
	background: #c2d7f5;
	border: 1px solid #5b7fae;
	border-radius: 2px;
}

.overflow {
	width: 14px;
	align-items: flex-end;
	color: #555;
}

.overflow svg {
	width: 8px;
	height: 8px;
}

.main {
	flex: 1;
	display: flex;
	min-height: 0;
	padding-bottom: 7px;
	background: linear-gradient(90deg, #d4d0c8, #f5f5f4);
}

/*两侧面板*/
.panel {
	display: flex;
	flex-direction: column;
	border: 1px solid #a0a0a0;
	border-top-width: 0;
	background: #f0f0f0;
}

.panel_head {
	display: flex;
	align-items: center;
	height: 18px;
	padding: 0 2px;
	background: #808080;
	color: #d0cba8;
}

.panel_head h2 {
	flex: 1;
}

.panel_head button {
	width: 16px;
}

.browser {
	width: 240px;
}

.browser_box {
	flex: 1;
	display: flex;
	flex-direction: column;
	margin: 4px 5px 2px 4px;
	border: 1px solid #d8d8d8;
	border-top: 2px solid #707070;
	border-left: 2px solid #808080;
	outline: 3px solid #fff;
	background: #fff;
	font-family: "Liberation Sans", "Noto Sans CJK SC", sans-serif;
	font-size: 11px;
}

.filter {
	display: flex;
	align-items: center;
	height: 29px;
	padding: 0 0 1px 5px;
	background: #f0f0f0;
	border-bottom: 1px solid #a0a0a0;
}

.filter input {
	flex: 1;
	min-width: 0;
	height: 20px;
	margin: 0 4px;
	border: 1px solid #7a7a7a;
	background: #fff;
}

.filter button {
	width: 22px;
}

.filter button:last-child {
	margin-right: 3px;
}

.filter .ico {
	width: 14px;
	height: 14px;
}

.tree li {
	display: flex;
	align-items: center;
	height: 16px;
	white-space: nowrap;
}

.tree span {
	margin-left: 3px;
	padding: 0 2px;
}

.tree .cjk {
	font-size: 12px;
}

.tree .cur {
	background: #f0f0f0;
}

.lv0 { padding-left: 4px; }
.lv1 { padding-left: 8px; }
.lv2 { padding-left: 27px; }

.box {
	display: flex;
	align-items: center;
	justify-content: center;
	width: 9px;
	height: 9px;
	border: 1px solid #919191;
	font-size: 9px;
	font-style: normal;
	line-height: 7px;
	color: #23408e;
}

.box.none {
	position: relative;
	border: 0;
}

/*竖向虚线*/
.box.none::before {
	content: "";
	position: absolute;
	left: 4px;
	top: -4px;
	height: 17px;
	width: 5px;
	border-left: 1px dotted #808080;
}

.box.none::after {
	content: "";
	position: absolute;
	left: 4px;
	top: 4px;
	width: 5px;
	border-top: 1px dotted #808080;
}

.dash {
	width: 6px;
	border-top: 1px dotted #808080;
}

.browser_tabs {
	display: flex;
	align-items: flex-start;
	height: 23px;
	font-family: "Liberation Mono", monospace;
	font-size: 10px;
}

.browser_tabs button {
	gap: 5px;
	height: 20px;
	padding: 0 4px;
	border: 1px solid #d9d9d9;
	border-width: 1px 1px 0 0;
}

.browser_tabs .active {
	height: 22px;
	padding: 0 8px;
	background: #fff;
	border-top-color: #fff;
}

/*画布*/
.work {
	flex: 1;
	display: flex;
	flex-direction: column;
	min-width: 0;
	margin: 0 6px;
}

.doc_tabs {
	display: flex;
	align-items: center;
	height: 20px;
}

.doc_tab {
	height: 19px;
	padding: 0 5px 2px 20px;
	margin: 1px 0 0 6px;
	font-weight: bold;
	background: linear-gradient(#fff, #e8e6e2);
	clip-path: polygon(16px 0, 100% 0, 100% 100%, 0 100%);
}

.rule {
	flex: 1;
}

.doc_btn {
	width: 17px;
	color: #222;
}

.doc_btn:last-child {
	margin-right: 2px;
}

.frame {
	flex: 1;
	display: grid;
	grid-template-columns: 1fr 16px;
	grid-template-rows: 1fr 16px;
	min-height: 0;
	border: 2px solid #808080;
	border-radius: 3px;
	box-shadow: 0 0 0 2px #d4d0c8, 0 0 0 3px #808080;
	margin: 2px 3px 3px 3px;
	background: #f0f0f0;
}

.canvas {
	position: relative;
	background: #fff;
}

.page_line {
	position: absolute;
	background: #000;
}

.page_line.h {
	left: 0;
	right: 0;
	top: 75px;
	height: 1px;
}

.page_line.v {
	top: 0;
	bottom: 0;
	width: 1px;
}

.v1 { left: 388px; }
.v2 { left: 1073px; }

.scroll {
	display: flex;
	justify-content: space-between;
	color: #505050;
}

.scroll svg {
	width: 9px;
	height: 9px;
}

.vert {
	flex-direction: column;
	align-items: center;
}

.scroll button {
	width: 16px;
	height: 16px;
}

.scroll .thumb {
	background: #cdcdcd;
}

.vert .thumb {
	width: 16px;
	height: 32px;
	margin-bottom: 12px;
}

.horz .thumb {
	width: 87px;
	height: 16px;
}

/*工具箱*/
.toolbox {
	width: 180px;
}

.toolbox_body {
	flex: 1;
	margin: 1px 2px 2px 2px;
	background: linear-gradient(90deg, #edf1f7, #fff);
}

.tb_modes {
	display: flex;
	align-items: center;
	gap: 2px;
	height: 30px;
	padding: 0 0 2px 2px;
	background: linear-gradient(#fafbfc, #d4d6d9);
}

.tb_modes button {
	width: 24px;
	height: 24px;
}

.toolbox h3 {
	display: flex;
	align-items: center;
	gap: 4px;
	height: 22px;
	padding-left: 1px;
	border-top: 1px solid #c8c8c8;
	background: linear-gradient(90deg, #e6e6e6, #f2f2f2);
}

.toolbox h3 button {
	width: 19px;
	height: 19px;
	border: 1px solid #222;
	border-radius: 50%;
	background: #fff;
}

.tools {
	display: grid;
	grid-template-columns: repeat(6, 26px);
	grid-auto-rows: 26px;
}

.tools .on {
	margin: 1px;
}

/*状态栏*/
.statusbar {
	display: flex;
	align-items: center;
	justify-content: space-between;
	height: 30px;
	padding: 0 13px 1px 0;
	border-top: 1px solid #a0a0a0;
	background: linear-gradient(#fbfcfe, #d2d4d6);
}

.dbms {
	padding: 3px 14px 2px 13px;
	border: 1px solid #707070;
	background: #f4f4f5;
}

.ime {
	display: flex;
	align-items: center;
}

.ime_logo {
	width: 32px;
	height: 29px;
}

.ime_bar {
	display: flex;
	height: 25px;
	padding-left: 1px;
	background: #fff;
	border: 1px solid #b4cdec;
	border-left: 0;
}

.ime_bar button {
	position: relative;
	width: 24px;
}

.ime_bar .ime_txt {
	color: #0b6fd8;
	font-size: 15px;
	font-weight: bold;
}

.user b {
	position: absolute;
	right: 1px;
	bottom: 3px;
	font-size: 8px;
	line-height: 8px;
	color: #999;
	background: #fff;
}

.side_meter {
	position: fixed;
	left: 0;
	top: 526px;
	width: 11px;
	height: 59px;
	padding: 18px 2px 5px;
	border-radius: 0 3px 3px 0;
	background: #3b4350;
}

.side_meter span {
	display: block;
	width: 5px;
	height: 100%;
	background: repeating-linear-gradient(transparent 0 1px, #3b4350 1px 2px), linear-gradient(#e0c84c, #46c8b0 60%, #46a0e0);
}

/*弹出窗口*/
.dialog {
	position: absolute;
	left: 595px;
	top: 235px;
	width: 731px;
	border: 1px solid #a0a0a0;
	background: #f0f0f0;
	box-shadow: 0 3px 14px rgba(0, 0, 0, 0.3);
}

.dlg_title {
	display: flex;
	align-items: center;
	height: 30px;
	padding: 0 0 2px 8px;
	background: #fff;
}

.dlg_title h2 {
	flex: 1;
	margin-left: 5px;
	color: #999;
}

.dlg_body {
	padding: 8px 7px 10px;
}

.tabs {
	display: flex;
	align-items: flex-end;
	height: 25px;
	padding-left: 2px;
}

.tabs button {
	justify-content: flex-start;
	height: 23px;
	min-width: 49px;
	padding: 0 6px;
	border: 1px solid #d9d9d9;
	border-bottom: 0;
	margin-right: -1px;
}

.tabs .active {
	position: relative;
	height: 26px;
	margin-bottom: -1px;
	padding: 0 8px 3px;
	background: #fff;
}

.tab_page {
	height: 450px;
	margin-right: 2px;
	padding: 16px 13px 0;
	border: 1px solid #d9d9d9;
	background: #fff;
}

.lists {
	display: flex;
	font-family: "Liberation Sans", sans-serif;
	font-size: 11px;
}

.listbox {
	position: relative;
	flex: 1;
	display: flex;
	flex-direction: column;
	justify-content: space-between;
	height: 393px;
	border: 1px solid #e3e3e3;
	border-top: 2px solid #696969;
	border-left: 2px solid #808080;
}

.options li {
	position: relative;
	height: 16px;
	padding-left: 23px;
	line-height: 15px;
	white-space: nowrap;
}

/*树形虚线*/
.options li::before {
	content: "";
	position: absolute;
	left: 12px;
	top: 0;
	bottom: 0;
	border-left: 1px dotted #808080;
}

.options li:first-child::before { top: 8px; }
.options li:last-child::before { bottom: 8px; }

.options li::after {
	content: "";
	position: absolute;
	left: 13px;
	top: 8px;
	width: 8px;
	border-top: 1px dotted #808080;
}

/*红色标注框*/
.mark {
	position: absolute;
	border: 3px solid #fe2010;
	border-radius: 3px;
}

.mark_left {
	left: 0;
	top: 272px;
	width: 215px;
	height: 70px;
}

.mark_right {
	left: 7px;
	top: -5px;
	width: 212px;
	height: 60px;
}

.sheets {
	display: flex;
	height: 17px;
	background: linear-gradient(#000 1px, #c8c8c8 1px);
	font-size: 12px;
}

.sheets .nav {
	width: 17px;
	border: 1px solid #000;
	border-left: 0;
	background: #f0f0f0;
	box-shadow: inset -1px -1px #a0a0a0;
	color: #999;
}

.sheet {
	padding: 0 3px;
	margin-top: 1px;
	background: #f0f0f0;
	border-bottom: 1px solid #808080;
}

.sheet.on {
	margin-top: 0;
	padding: 0 3px 0 2px;
	background: #fff;
}

.slant {
	width: 8px;
	height: 17px;
	fill: #f0f0f0;
}

.slant.on {
	fill: #fff;
}

.slant .ln {
	fill: none;
	stroke: #606060;
}

.movers {
	display: flex;
	flex-direction: column;
	justify-content: center;
	gap: 6px;
	width: 35px;
	padding: 0 7px 0 8px;
}

.movers button {
	height: 15px;
	border: 1px solid #adadad;
	background: #e1e1e1;
}

.btn {
	width: 86px;
	height: 28px;
	padding-bottom: 1px;
	border: 1px solid #adadad;
	background: #e1e1e1;
	font-family: "Liberation Sans", "Noto Sans CJK SC", sans-serif;
}

.btn.small {
	width: 55px;
	height: 18px;
	margin-top: 12px;
	font-size: 11px;
}

.dlg_foot {
	display: flex;
	align-items: center;
	gap: 9px;
	margin-top: 9px;
}

.btn.more {
	width: 72px;
	font-size: 11px;
}

.report {
	gap: 6px;
}

.fill {
	flex: 1;
}
```
